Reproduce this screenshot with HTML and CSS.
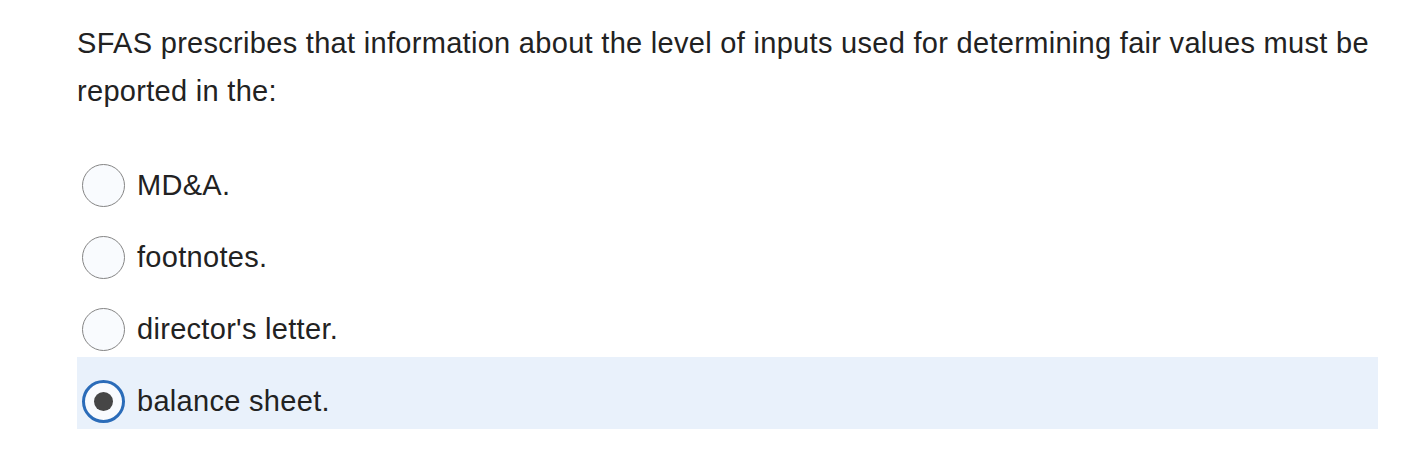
FILE: index.html
```html
<!DOCTYPE html>
<html>
<head>
<meta charset="utf-8">
<link rel="stylesheet" href="styles.css">
</head>
<body>
<div class="question">
  <p class="prompt">SFAS prescribes that information about the level of inputs used for determining fair values must be reported in the:</p>
  <ul class="options">
    <li class="option"><span class="radio"></span><span class="label">MD&amp;A.</span></li>
    <li class="option"><span class="radio"></span><span class="label">footnotes.</span></li>
    <li class="option"><span class="radio"></span><span class="label">director's letter.</span></li>
    <li class="option selected"><span class="radio"><span class="dot"></span></span><span class="label">balance sheet.</span></li>
  </ul>
</div>
</body>
</html>
```
FILE: styles.css
```css
html, body {
  margin: 0;
  padding: 0;
  background: #ffffff;
}
body {
  font-family: "Liberation Sans", Arial, sans-serif;
  color: #222222;
  letter-spacing: 0.3px;
}
.question {
  width: 1301px;
  margin-left: 77px;
  padding-top: 19px;
}
.prompt {
  margin: 0;
  font-size: 29px;
  line-height: 48px;
}
.options {
  list-style: none;
  margin: 26px 0 0 0;
  padding: 0;
}
.option {
  box-sizing: border-box;
  display: flex;
  align-items: center;
  height: 72px;
  padding-left: 5px;
  padding-top: 16px;
  font-size: 29px;
}
.option.selected {
  background: #e9f1fb;
}
.radio {
  box-sizing: border-box;
  width: 43px;
  height: 43px;
  border-radius: 50%;
  border: 1px solid #858585;
  background: #f9fbfe;
  display: flex;
  align-items: center;
  justify-content: center;
  flex: none;
}
.selected .radio {
  border: 3px solid #2b6cb9;
}
.dot {
  width: 19px;
  height: 19px;
  border-radius: 50%;
  background: #464646;
}
.label {
  margin-left: 12px;
}
```
